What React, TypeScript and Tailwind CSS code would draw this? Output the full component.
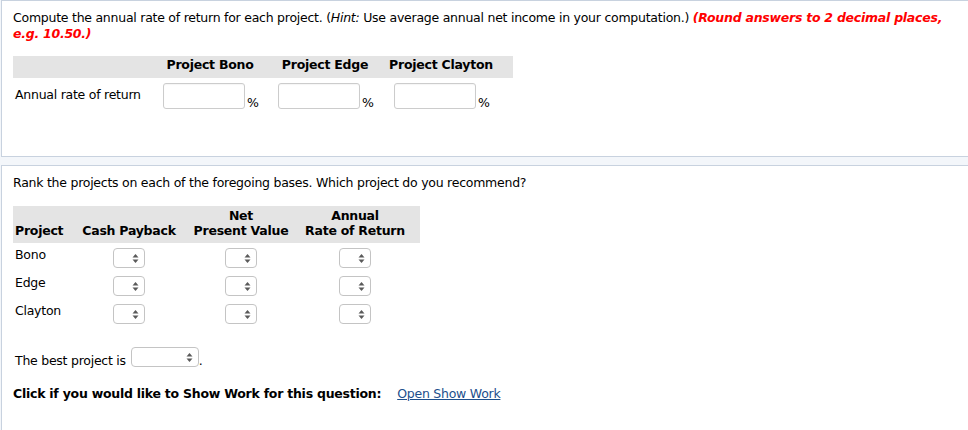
import React from 'react'

const font = { fontFamily: '"DejaVu Sans", Verdana, sans-serif' }

function Select({ wide = false }: { wide?: boolean }) {
  return (
    <div
      className={`${wide ? 'w-[68px]' : 'w-[32px]'} h-[20px] shrink-0 rounded-[4px] border border-[#c4c4c4] bg-white flex items-center justify-end pr-[5px]`}
    >
      <svg width="7" height="11" viewBox="0 0 7 11">
        <path d="M3.5 1 L6.5 4.5 L0.5 4.5 Z" fill="#5a5a5a" />
        <path d="M3.5 10 L6.5 6.5 L0.5 6.5 Z" fill="#5a5a5a" />
      </svg>
    </div>
  )
}

function PercentInput() {
  return (
    <div className="flex items-end">
      <div className="w-[82px] h-[26px] rounded-[3px] border border-[#cccccc] bg-white shadow-[inset_0_1px_1px_rgba(0,0,0,0.04)]" />
      <span className="ml-[2px] -mb-[2px] leading-[16px]">%</span>
    </div>
  )
}

const rankRows = ['Bono', 'Edge', 'Clayton']

export default function App() {
  return (
    <div
      style={font}
      className="w-[968px] h-[430px] overflow-hidden bg-[#f3f6fa] text-[12.5px] tracking-[-0.25px] leading-[16px] text-black flex flex-col"
    >
      {/* rate of return panel */}
      <div className="ml-[1px] h-[157px] shrink-0 bg-white border-t border-l border-b border-[#c8d2df] pl-[11px] pt-[9px]">
        <p className="whitespace-nowrap">
          Compute the annual rate of return for each project. (<i>Hint:</i> Use average annual net income in your
          computation.){' '}
          <b className="italic text-[#ff0000]">
            (Round answers to 2 decimal places,
            <br />
            e.g. 10.50.)
          </b>
        </p>

        <div className="mt-[14px] w-[500px]">
          <div className="grid grid-cols-[150px_115px_116px_119px] h-[22px] bg-[#e4e4e4] pt-[1px] font-bold">
            <div />
            {['Project Bono', 'Project Edge', 'Project Clayton'].map((h) => (
              <div key={h} className="w-[94px] flex justify-center whitespace-nowrap">
                {h}
              </div>
            ))}
          </div>
          <div className="grid grid-cols-[150px_115px_116px_119px] mt-[5px] items-center">
            <div className="pl-[2px] -mt-[2px]">Annual rate of return</div>
            <PercentInput />
            <PercentInput />
            <PercentInput />
          </div>
        </div>
      </div>

      {/* ranking panel */}
      <div className="ml-[1px] mt-[8px] flex-1 bg-white border-t border-l border-[#c8d2df] pl-[11px] pt-[9px]">
        <p>Rank the projects on each of the foregoing bases. Which project do you recommend?</p>

        <div className="mt-[15px] w-[407px]">
          <div className="grid grid-cols-[64px_104px_120px_108px] h-[37px] bg-[#e4e4e4] items-end pb-[5px] font-bold leading-[15px]">
            <div className="pl-[2px]">Project</div>
            <div className="text-center whitespace-nowrap">Cash Payback</div>
            <div className="text-center whitespace-nowrap">
              Net
              <br />
              Present Value
            </div>
            <div className="text-center whitespace-nowrap">
              Annual
              <br />
              Rate of Return
            </div>
          </div>
          {rankRows.map((r) => (
            <div key={r} className="grid grid-cols-[64px_104px_120px_108px] h-[28px] pt-[4px] items-start">
              <div className="pl-[2px]">{r}</div>
              <div className="flex justify-center mt-[1px]">
                <Select />
              </div>
              <div className="flex justify-center mt-[1px]">
                <Select />
              </div>
              <div className="flex justify-center mt-[1px]">
                <Select />
              </div>
            </div>
          ))}
        </div>

        <div className="mt-[20px] flex items-end pl-[2px]">
          <span>The best project is</span>
          <span className="ml-[5px] mb-[2px]">
            <Select wide />
          </span>
          <span>.</span>
        </div>

        <div className="mt-[17px] flex items-center">
          <b>Click if you would like to Show Work for this question:</b>
          <a href="#" className="ml-[16px] text-[#1d4f8c] underline">
            Open Show Work
          </a>
        </div>
      </div>
    </div>
  )
}
